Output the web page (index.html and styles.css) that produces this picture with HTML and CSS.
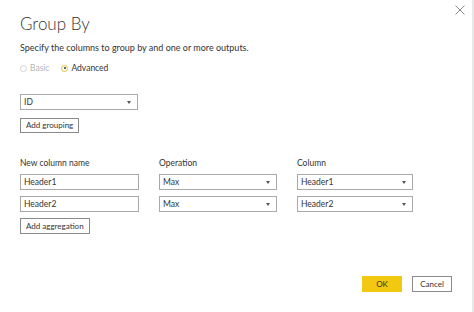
FILE: index.html
```html
<!DOCTYPE html>
<html>
<head>
<meta charset="utf-8">
<link rel="stylesheet" href="styles.css">
</head>
<body>
<div class="dialog">
  <button class="close" aria-label="Close">
    <svg width="10" height="10" viewBox="0 0 10 10"><path d="M0.5 0.5 L9.5 9.5 M9.5 0.5 L0.5 9.5" stroke="#8a8a8a" stroke-width="1" fill="none"/></svg>
  </button>
  <h1 class="title">Group By</h1>
  <p class="subtitle">Specify the columns to group by and one or more outputs.</p>
  <div class="radios">
    <label class="radio disabled"><span class="dot"></span>Basic</label>
    <label class="radio checked"><span class="dot"></span>Advanced</label>
  </div>
  <div class="select wide grp"><span>ID</span><span class="arrow"></span></div>
  <button class="btn add-grp">Add grouping</button>
  <div class="grid">
    <div class="lbl">New column name</div>
    <div class="lbl">Operation</div>
    <div class="lbl">Column</div>
    <div class="input">Header1</div>
    <div class="select"><span>Max</span><span class="arrow"></span></div>
    <div class="select col"><span>Header1</span><span class="arrow"></span></div>
    <div class="input">Header2</div>
    <div class="select"><span>Max</span><span class="arrow"></span></div>
    <div class="select col"><span>Header2</span><span class="arrow"></span></div>
  </div>
  <button class="btn add-agg">Add aggregation</button>
  <div class="footer">
    <button class="ok">OK</button>
    <button class="cancel">Cancel</button>
  </div>
</div>
</body>
</html>
```
FILE: styles.css
```css
* { box-sizing: border-box; }
html, body { margin: 0; padding: 0; background: #fff; }
body {
  width: 474px; height: 312px; overflow: hidden;
  font-family: Lato, "Open Sans", "Liberation Sans", sans-serif;
  color: #333;
}
.dialog {
  position: relative;
  width: 474px; height: 312px;
  border-right: 2px solid #e8e8e8;
  padding: 0 0 0 20px;
  display: flex; flex-direction: column; align-items: flex-start;
}
.close {
  position: absolute; top: 5px; right: 7px;
  width: 10px; height: 10px; padding: 0; border: 0; background: none;
  display: flex;
}
.title {
  margin: 13px 0 0 0;
  font-size: 17px; font-weight: 300; line-height: 22px; color: #333;
}
.subtitle {
  margin: 6px 0 0 0;
  font-size: 9px; line-height: 14px; color: #333;
}
.radios { display: flex; gap: 12px; margin-top: 7px; }
.radio { display: flex; align-items: center; gap: 3px; font-size: 8.5px; line-height: 12px; color: #333; }
.radio .dot { width: 7px; height: 7px; border-radius: 50%; border: 1px solid #999; display: inline-block; position: relative; }
.radio.disabled { color: #b5b5b5; }
.radio.disabled .dot { border-color: #d4d4d4; }
.radio.checked .dot { border-color: #e6c22a; background: #fff; }
.radio.checked .dot::after { content: ""; position: absolute; left: 1.5px; top: 1.5px; width: 2px; height: 2px; border-radius: 50%; background: #333; }
.select, .input {
  height: 16px; border: 1px solid #a9a9a9; background: #fff;
  font-size: 8.5px; line-height: 14px; color: #333;
  display: flex; align-items: center; justify-content: space-between;
  padding: 0 6px 0 3px;
}
.select .arrow {
  width: 0; height: 0;
  border-left: 2.5px solid transparent; border-right: 2.5px solid transparent;
  border-top: 3px solid #555;
}
.grp { width: 118px; margin-top: 20px; }
.btn {
  font-family: inherit; font-size: 8px; color: #333;
  background: #fff; border: 1px solid #8a8a8a;
  height: 15px; padding: 0 5px; line-height: 13px;
}
.add-grp { margin-top: 8px; }
.grid {
  margin-top: 24px;
  display: grid; grid-template-columns: 119px 118px 116px; column-gap: 20px; row-gap: 6px;
  align-items: end;
}
.grid .lbl { font-size: 8.5px; line-height: 12px; color: #333; margin-bottom: -1px; }
.input { padding-left: 3px; }
.col { width: 116px; }
.add-agg { margin-top: 6px; height: 16px; }
.footer {
  position: absolute; right: 20px; bottom: 20px;
  display: flex; gap: 10px;
}
.ok, .cancel {
  width: 40px; height: 16px; font-family: inherit; font-size: 8px; color: #333; padding: 0;
}
.ok { background: #f2c811; border: 1px solid #f2c811; }
.cancel { background: #fff; border: 1px solid #8a8a8a; }
```
